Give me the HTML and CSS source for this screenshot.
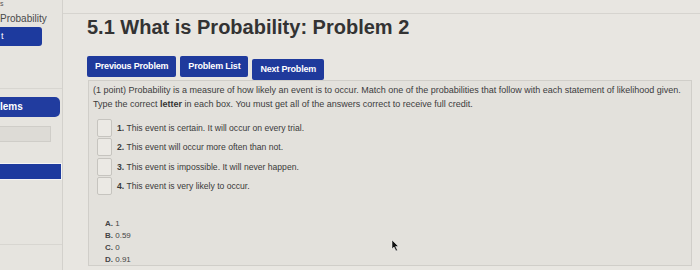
FILE: index.html
```html
<!DOCTYPE html>
<html>
<head>
<meta charset="utf-8">
<link rel="stylesheet" href="styles.css">
</head>
<body>
<div class="page">
  <aside class="sidebar">
    <div class="panel panel-top">
      <div class="cut">s</div>
      <div class="course">Probability</div>
      <div class="nav-bar"><span>t</span></div>
    </div>
    <div class="panel panel-mid">
      <div class="nav-btn">lems</div>
      <div class="nav-input"></div>
      <div class="nav-bar wide"></div>
    </div>
  </aside>
  <main class="main">
    <h1 class="title">5.1 What is Probability: Problem 2</h1>
    <div class="buttons">
      <a class="btn">Previous Problem</a>
      <a class="btn">Problem List</a>
      <a class="btn">Next Problem</a>
    </div>
    <section class="problem">
      <p class="intro">(1 point) Probability is a measure of how likely an event is to occur. Match one of the probabilities that follow with each statement of likelihood given.<br>Type the correct <b>letter</b> in each box. You must get all of the answers correct to receive full credit.</p>
      <div class="items">
        <div class="item"><span class="box"></span><span><b>1.</b> This event is certain. It will occur on every trial.</span></div>
        <div class="item"><span class="box"></span><span><b>2.</b> This event will occur more often than not.</span></div>
        <div class="item"><span class="box"></span><span><b>3.</b> This event is impossible. It will never happen.</span></div>
        <div class="item"><span class="box"></span><span><b>4.</b> This event is very likely to occur.</span></div>
      </div>
      <div class="answers">
        <div><b>A.</b> 1</div>
        <div><b>B.</b> 0.59</div>
        <div><b>C.</b> 0</div>
        <div><b>D.</b> 0.91</div>
      </div>
      <svg class="cursor" width="8" height="12" viewBox="0 0 8 12"><path d="M1 0 L1 9 L3 7 L5 11 L6.5 10.3 L4.6 6.5 L7.5 6.5 Z" fill="#111" stroke="#fff" stroke-width="0.5"/></svg>
    </section>
  </main>
</div>
</body>
</html>
```
FILE: styles.css
```css
html, body {
  margin: 0;
  padding: 0;
  background: #e8e6e1;
  font-family: "Liberation Sans", Arial, sans-serif;
  color: #3a3a3a;
}
.page {
  display: grid;
  grid-template-columns: 63px 1fr;
  width: 700px;
  height: 270px;
  overflow: hidden;
}
.sidebar {
  background: #e6e4df;
  border-right: 1px solid #d3d1cc;
  display: flex;
  flex-direction: column;
}
.panel-top {
  height: 88px;
  border-bottom: 1px solid #d8d6d1;
}
.panel-mid {
  height: 156px;
  padding-top: 8px;
  border-bottom: 1px solid #d8d6d1;
  box-sizing: border-box;
}
.cut {
  font-size: 7px;
  line-height: 8px;
  color: #555;
}
.course {
  font-size: 10px;
  margin: 4px 0 0 0;
  color: #4a4a4a;
  line-height: 13px;
}
.nav-bar {
  margin-top: 2px;
  width: 42px;
  height: 19px;
  background: #1d3a9e;
  border-radius: 0 3px 3px 0;
  color: #fff;
  font-size: 9px;
  line-height: 19px;
}
.nav-bar span { margin-left: 1px; }
.nav-btn {
  width: 60px;
  height: 20px;
  background: #213c9f;
  border-radius: 0 5px 5px 0;
  color: #fff;
  font-weight: bold;
  font-size: 10px;
  line-height: 20px;
  box-sizing: border-box;
}
.nav-input {
  margin-top: 9px;
  width: 50px;
  height: 14px;
  background: #dddbd6;
  border: 1px solid #cfcdc8;
  border-left: 0;
}
.nav-bar.wide {
  margin-top: 21px;
  width: 61px;
  height: 15px;
  border-radius: 0;
  border-top: 1px solid #f4f4f4;
  border-bottom: 1px solid #f4f4f4;
  border-right: 1px solid #f4f4f4;
}
.main {
  padding: 0 8px 0 24px;
  border-top: 1px solid #d6d4cf;
  margin-top: 13px;
}
.title {
  margin: 1px 0 0 0;
  font-size: 20px;
  line-height: 24px;
  font-weight: bold;
  color: #333;
}
.buttons {
  display: flex;
  align-items: flex-start;
  gap: 4px;
  height: 21px;
  margin-top: 17px;
}
.btn {
  background: #1f3a9c;
  color: #fff;
  font-size: 9px;
  font-weight: bold;
  letter-spacing: -0.2px;
  height: 21px;
  line-height: 21px;
  padding: 0 8px;
  border-radius: 2px;
}
.btn:nth-child(3) { margin-top: 3px; }
.problem {
  position: relative;
  margin-top: 3px;
  margin-left: 1px;
  width: 604px;
  height: 186px;
  box-sizing: border-box;
  background: #e3e1dc;
  border: 1px solid #d0cec9;
  padding: 2px 3px 2px 4px;
}
.intro {
  margin: 0;
  font-size: 9px;
  line-height: 14px;
  white-space: nowrap;
  color: #3c3c3c;
}
.intro b { color: #333; }
.items {
  margin-top: 8px;
  margin-left: 4px;
  display: flex;
  flex-direction: column;
  gap: 2px;
}
.item {
  display: flex;
  align-items: center;
  gap: 5px;
  height: 17.5px;
  font-size: 8.6px;
  color: #3a3a3a;
}
.box {
  width: 13px;
  height: 16px;
  background: #ebe9e4;
  border: 1px solid #c6c4bf;
  border-radius: 2px;
}
.answers {
  margin-top: 23px;
  margin-left: 12px;
  font-size: 8px;
  line-height: 12px;
  color: #444;
}
.cursor {
  position: absolute;
  left: 302px;
  top: 159px;
}
```
